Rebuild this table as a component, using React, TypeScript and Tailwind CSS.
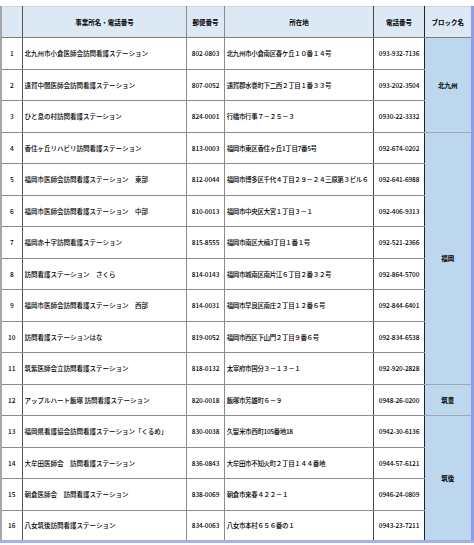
import React from 'react';

type Row = { no: number; name: string; zip: string; addr: string; tel: string };

const rows: Row[] = [
  { no: 1, name: '北九州市小倉医師会訪問看護ステーション', zip: '802-0803', addr: '北九州市小倉南区春ケ丘１０番１４号', tel: '093-932-7136' },
  { no: 2, name: '遠賀中間医師会訪問看護ステーション', zip: '807-0052', addr: '遠賀郡水巻町下二西２丁目１番３３号', tel: '093-202-3504' },
  { no: 3, name: 'ひと息の村訪問看護ステーション', zip: '824-0001', addr: '行橋市行事７－２５－３', tel: '0930-22-3332' },
  { no: 4, name: '香住ヶ丘リハビリ訪問看護ステーション', zip: '813-0003', addr: '福岡市東区香住ヶ丘1丁目7番5号', tel: '092-674-0202' },
  { no: 5, name: '福岡市医師会訪問看護ステーション　東部', zip: '812-0044', addr: '福岡市博多区千代４丁目２９－２４三原第３ビル６', tel: '092-641-6988' },
  { no: 6, name: '福岡市医師会訪問看護ステーション　中部', zip: '810-0013', addr: '福岡市中央区大宮１丁目３－１', tel: '092-406-9313' },
  { no: 7, name: '福岡赤十字訪問看護ステーション', zip: '815-8555', addr: '福岡市南区大楠3丁目１番１号', tel: '092-521-2366' },
  { no: 8, name: '訪問看護ステーション　さくら', zip: '814-0143', addr: '福岡市城南区南片江６丁目２番３２号', tel: '092-864-5700' },
  { no: 9, name: '福岡市医師会訪問看護ステーション　西部', zip: '814-0031', addr: '福岡市早良区南庄２丁目１２番６号', tel: '092-844-6401' },
  { no: 10, name: '訪問看護ステーションはな', zip: '819-0052', addr: '福岡市西区下山門２丁目９番６号', tel: '092-834-6538' },
  { no: 11, name: '筑紫医師会立訪問看護ステーション', zip: '818-0132', addr: '太宰府市国分３－１３－１', tel: '092-920-2828' },
  { no: 12, name: 'アップルハート飯塚 訪問看護ステーション', zip: '820-0018', addr: '飯塚市芳雄町６－９', tel: '0948-26-0200' },
  { no: 13, name: '福岡県看護協会訪問看護ステーション「くるめ」', zip: '830-0038', addr: '久留米市西町105番地18', tel: '0942-30-6136' },
  { no: 14, name: '大牟田医師会　訪問看護ステーション', zip: '836-0843', addr: '大牟田市不知火町２丁目１４４番地', tel: '0944-57-6121' },
  { no: 15, name: '朝倉医師会　訪問看護ステーション', zip: '838-0069', addr: '朝倉市来春４２２－１', tel: '0946-24-0809' },
  { no: 16, name: '八女筑後訪問看護ステーション', zip: '834-0063', addr: '八女市本村６５６番の１', tel: '0943-23-7211' },
];

const blocks: Record<number, { label: string; span: number }> = {
  1: { label: '北九州', span: 3 },
  4: { label: '福岡', span: 8 },
  12: { label: '筑豊', span: 1 },
  13: { label: '筑後', span: 4 },
};

export default function App() {
  return (
    <div className="w-[474px] h-[545px] bg-white pt-[6px] text-black text-[6.5px] leading-none font-medium" style={{ fontFamily: '"Noto Sans CJK JP", "Noto Sans", sans-serif' }}>
      <table className="table-fixed border-collapse w-[474px] border-l-[2px] border-l-[#a6a6a6] border-r-[3px] border-r-[#8f9de6] border-b-[3px] border-b-[#a3aff0]">
        <colgroup>
          <col className="w-[21px]" />
          <col className="w-[164px]" />
          <col className="w-[37px]" />
          <col className="w-[149px]" />
          <col className="w-[50px]" />
          <col className="w-[48px]" />
        </colgroup>
        <thead>
          <tr className="h-[31px] bg-[#dce9f5] font-bold">
            <th className="border-t border-t-[#c8d4e0] border-r border-r-[#555] border-b border-b-[#7f7f7f]" />
            <th className="border-t border-t-[#c8d4e0] border-r border-r-[#8c8c8c] border-b border-b-[#7f7f7f] text-center">事業所名・電話番号</th>
            <th className="border-t border-t-[#c8d4e0] border-r border-r-[#8c8c8c] border-b border-b-[#7f7f7f] text-center">郵便番号</th>
            <th className="border-t border-t-[#c8d4e0] border-r border-r-[#444] border-b border-b-[#7f7f7f] text-center">所在地</th>
            <th className="border-t border-t-[#c8d4e0] border-r border-r-[#222] border-b border-b-[#7f7f7f] text-center">電話番号</th>
            <th className="border-t border-t-[#c8d4e0] border-b border-b-[#7f7f7f] text-center">ブロック名</th>
          </tr>
        </thead>
        <tbody>
          {rows.map((r) => (
            <tr key={r.no} className="h-[31.5px]">
              <td className="border-r border-r-[#555] border-b border-b-[#8c8c8c] text-center">{r.no}</td>
              <td className="border-r border-r-[#8c8c8c] border-b border-b-[#8c8c8c] pl-[2px] whitespace-nowrap overflow-hidden">{r.name}</td>
              <td className="border-r border-r-[#8c8c8c] border-b border-b-[#8c8c8c] text-center tracking-[-0.1px]">{r.zip}</td>
              <td className="border-r border-r-[#444] border-b border-b-[#8c8c8c] pl-[2px] whitespace-nowrap overflow-hidden tracking-[-0.35px]">{r.addr}</td>
              <td className="border-r border-r-[#222] border-b border-b-[#8c8c8c] text-center tracking-[-0.1px]">{r.tel}</td>
              {blocks[r.no] && (
                <td rowSpan={blocks[r.no].span} className="bg-[#bdd7ee] border-b border-b-[#9aa8b8] text-center font-bold">
                  {blocks[r.no].label}
                </td>
              )}
            </tr>
          ))}
        </tbody>
      </table>
    </div>
  );
}
